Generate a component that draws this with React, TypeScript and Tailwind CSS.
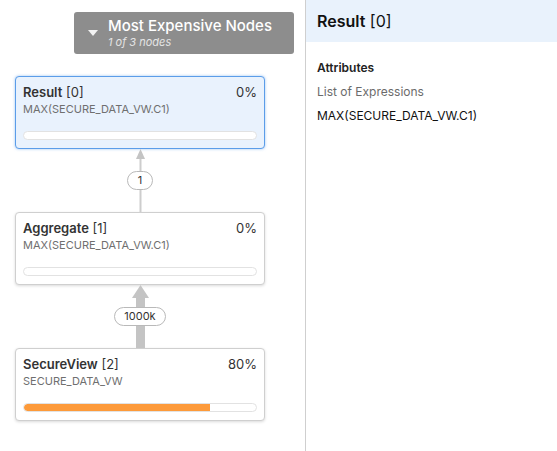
import React from 'react';

type PlanNode = {
  id: number;
  name: string;
  detail: string;
  percent: number;
  selected?: boolean;
};

const nodes: PlanNode[] = [
  { id: 0, name: 'Result', detail: 'MAX(SECURE_DATA_VW.C1)', percent: 0, selected: true },
  { id: 1, name: 'Aggregate', detail: 'MAX(SECURE_DATA_VW.C1)', percent: 0 },
  { id: 2, name: 'SecureView', detail: 'SECURE_DATA_VW', percent: 80 },
];

const edges = [
  { label: '1', thick: false },
  { label: '1000k', thick: true },
];

function NodeCard({ node }: { node: PlanNode }) {
  return (
    <div
      className={`ml-[15px] w-[250px] h-[73px] rounded-[4px] border px-[7px] pt-[7px] flex flex-col ${
        node.selected
          ? 'bg-[#e9f2fd] border-[#5b9de9] shadow-[0_0_3px_rgba(91,157,233,0.6)]'
          : 'bg-white border-[#cfcfcf] shadow-[0_1px_3px_rgba(0,0,0,0.15)]'
      }`}
    >
      <div className="flex items-center justify-between h-[18px] text-[13px] text-[#333]">
        <span>
          <span className="font-semibold">{node.name}</span> [{node.id}]
        </span>
        <span>{node.percent}%</span>
      </div>
      <div className="text-[11px] text-[#6f6f6f] h-[15px] leading-[15px]">{node.detail}</div>
      <div className="mt-[14px] h-[9px] rounded-full border border-[#e2e2e2] bg-white overflow-hidden">
        <div className="h-full bg-[#fd9a3a] rounded-l-full" style={{ width: `${node.percent}%` }} />
      </div>
    </div>
  );
}

function Edge({ label, thick }: { label: string; thick: boolean }) {
  return (
    <div className="relative ml-[15px] w-[250px] h-[63px]">
      <svg className="absolute inset-0" width="250" height="63" viewBox="0 0 250 63">
        {thick ? (
          <>
            <rect x="121" y="12" width="9" height="51" fill="#c4c4c4" />
            <polygon points="125.5,0 134,13 117,13" fill="#c4c4c4" />
          </>
        ) : (
          <>
            <rect x="124.5" y="8" width="2" height="55" fill="#cdcdcd" />
            <polygon points="125.5,0 130,10 121,10" fill="#c4c4c4" />
          </>
        )}
      </svg>
      <div className="absolute inset-x-0 top-[22px] flex justify-center">
        <span
          className={`h-[19px] rounded-full border border-[#b9b9b9] bg-white text-[11px] text-[#333] flex items-center justify-center ${
            thick ? 'w-[52px]' : 'w-[26px]'
          }`}
        >
          {label}
        </span>
      </div>
    </div>
  );
}

export default function App() {
  return (
    <div className="flex w-[557px] h-[451px] bg-white font-['Inter','Liberation_Sans',sans-serif] overflow-hidden">
      {/* Plan canvas */}
      <div className="w-[306px] shrink-0 border-r border-[#cfcfcf] pt-[12px]">
        <div className="ml-[74px] w-[220px] h-[42px] rounded-[3px] bg-[#8d8d8d] flex items-center">
          <svg className="ml-[14px]" width="10" height="6" viewBox="0 0 10 6">
            <polygon points="0,0 10,0 5,6" fill="#f2f2f2" />
          </svg>
          <div className="ml-[10px] flex flex-col pt-[1px]">
            <span className="text-[15px] font-medium text-white leading-[18px]">Most Expensive Nodes</span>
            <span className="text-[11px] italic text-[#e4e4e4] leading-[15px]">1 of 3 nodes</span>
          </div>
        </div>
        <div className="mt-[22px] flex flex-col">
          {nodes.map((node, i) => (
            <React.Fragment key={node.id}>
              <NodeCard node={node} />
              {edges[i] && <Edge label={edges[i].label} thick={edges[i].thick} />}
            </React.Fragment>
          ))}
        </div>
      </div>

      {/* Detail panel */}
      <div className="flex-1 flex flex-col">
        <div className="h-[42px] bg-[#e9f2fc] flex items-center pl-[11px] text-[16px] text-[#111]">
          <span className="font-semibold">Result</span>&nbsp;[0]
        </div>
        <div className="pl-[11px] pt-[18px] text-[12px]">
          <div className="font-semibold text-[#222] leading-[16px]">Attributes</div>
          <div className="mt-[8px] text-[#6b6b6b] leading-[16px]">List of Expressions</div>
          <div className="mt-[8px] text-[#111] leading-[16px]">MAX(SECURE_DATA_VW.C1)</div>
        </div>
      </div>
    </div>
  );
}
